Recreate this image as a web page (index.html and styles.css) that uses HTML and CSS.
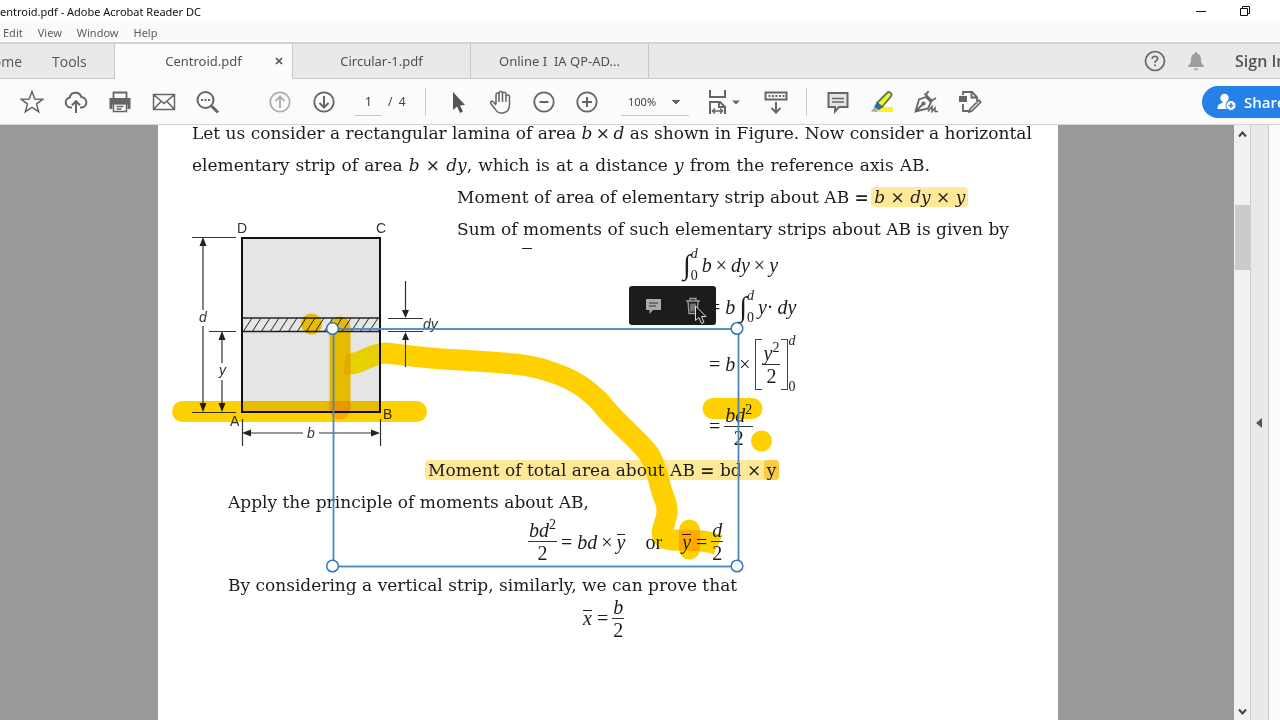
FILE: index.html
```html
<!DOCTYPE html>
<html lang="en">
<head>
<meta charset="utf-8">
<title>Centroid.pdf - Adobe Acrobat Reader DC</title>
<link rel="stylesheet" href="styles.css">
</head>
<body>
<div class="app">
  <header class="titlebar">
    <span class="title">Centroid.pdf - Adobe Acrobat Reader DC</span>
    <div class="window-controls">
      <button aria-label="Minimize"><svg width="12" height="12"><path d="M1 5.500h10" stroke="#111"/></svg></button>
      <button aria-label="Restore"><svg width="12" height="12" fill="none" stroke="#111"><path d="M1.500 2.500h7v7h-7zM3.500 2.500v-2h7v7h-2"/></svg></button>
    </div>
  </header>
  <nav class="menubar" aria-label="Menu">
    <button>Edit</button><button>View</button><button>Window</button><button>Help</button>
  </nav>
  <nav class="tabs" aria-label="Documents">
    <button class="home">Home</button>
    <button class="tools">Tools</button>
    <div class="tab active"><button>Centroid.pdf</button><button class="close" aria-label="Close tab"><svg width="8" height="8"><path d="M1 1l6 6M7 1L1 7" stroke="#555" stroke-width="1.700"/></svg></button></div>
    <div class="tab"><button>Circular-1.pdf</button></div>
    <div class="tab"><button>Online I&nbsp; IA QP-AD...</button></div>
    <div class="account">
      <button aria-label="Help"><svg width="22" height="22" fill="none" stroke="#666" stroke-width="1.700"><circle cx="11" cy="11" r="9.500"/><path d="M8.200 8.700c0-3.300 5.600-3.200 5.400 0-.1 1.900-2.700 2-2.700 4.200M10.900 14.400v1.800"/></svg></button>
      <button aria-label="Notifications"><svg width="18" height="20" fill="#9d9d9d"><path d="M8 1h2v1.500c3 .7 4 3 4 6 0 3.500 1 5 3 6.500v1H1v-1c2-1.500 3-3 3-6.500 0-3 1-5.300 4-6zM6.500 17.500h5c-.8 2.200-4.200 2.200-5 0z"/></svg></button>
      <button class="signin">Sign In</button>
    </div>
  </nav>
  <div class="toolbar">
    <div class="group">
      <button aria-label="Star"><svg class="ic" viewBox="0 0 24 24"><path d="M12 1.500l2.800 7.400 7.900.3-6.200 4.900 2.200 7.600-6.700-4.400-6.700 4.400 2.200-7.600-6.200-4.900 7.900-.3z" stroke-width="1.500"/></svg></button>
      <button aria-label="Upload"><svg class="ic" viewBox="0 0 24 24"><path d="M8 17.500H6.500a5 5 0 01-.7-9.900C6.700 1.400 15.500 1 17.300 7c6.800.6 6.600 10.500 0 10.500H16M12 23V11.500M8 15.200l4-4 4 4" stroke-width="2"/></svg></button>
      <button aria-label="Print"><svg class="ic" viewBox="0 0 24 24"><path d="M5.500 8V2.500h13V8"/><path d="M1.500 8h21v11h-3v-4.500h-15V19h-3z" fill="#666" stroke="none"/><path d="M5.500 13.500h13v8h-13zM8.500 16.500h7M8.500 19h5" stroke-width="1.500"/></svg></button>
      <button aria-label="Email"><svg class="ic" viewBox="0 0 24 24"><path d="M1.500 4.500h21v15h-21zM1.500 4.500L12 13.500l10.500-9M1.500 19.500l7.500-8M22.500 19.500l-7.500-8" stroke-width="1.500"/></svg></button>
      <button aria-label="Find"><svg class="ic" viewBox="0 0 24 24"><circle cx="9.500" cy="10" r="8" stroke-width="2"/><path d="M15.500 16l6.500 6.500" stroke-width="3"/><path d="M5 10h2M8.500 10h2M12 10h2" stroke-width="2"/></svg></button>
    </div>
    <div class="group pages">
      <button aria-label="Previous page" disabled><svg class="ic pale" viewBox="0 0 24 24"><circle cx="12" cy="12" r="9.700"/><path d="M12 18V7M7.500 11L12 6.500l4.500 4.500" stroke-width="2"/></svg></button>
      <button aria-label="Next page"><svg class="ic" viewBox="0 0 24 24"><circle cx="12" cy="12" r="9.700"/><path d="M12 6v11M7.500 13l4.500 4.500 4.500-4.500" stroke-width="2"/></svg></button>
      <input class="page-no" type="text" value="1" aria-label="Page number"><span class="page-count">/&nbsp; 4</span>
    </div>
    <div class="group view">
      <button aria-label="Select"><svg class="ic" viewBox="0 0 24 24"><path d="M7 2v18l4-3.500 3 6.500 3-1.500-3-6 5-.5z" fill="#555" stroke="none"/></svg></button>
      <button aria-label="Hand"><svg class="ic" viewBox="0 0 24 24"><path d="M7 14V4.500c0-2 3-2 3 0V12 3c0-2 3.500-2 3.500 0v9V3.800c0-2 3.400-2 3.400 0V12 6.500c0-2 3.600-2 3.600 0v8c0 10-11.500 10.500-14 5L2 13.800c-1.300-2.200 1.200-3.300 2.500-1.800L7 15" stroke-width="1.500"/></svg></button>
      <button aria-label="Zoom out"><svg class="ic" viewBox="0 0 24 24"><circle cx="12" cy="12" r="9.700"/><path d="M7.500 12h9" stroke-width="2"/></svg></button>
      <button aria-label="Zoom in"><svg class="ic" viewBox="0 0 24 24"><circle cx="12" cy="12" r="9.700"/><path d="M7 12h10M12 7v10" stroke-width="2"/></svg></button>
      <div class="zoom"><select aria-label="Zoom level"><option>100%</option><option>125%</option></select></div>
      <button class="fit" aria-label="Fit width"><svg width="34" height="24" fill="none" stroke="#666" stroke-width="2"><path d="M3 0v7h15V0M3 24V12h10l5 5v7M12 12v5h6"/><path d="M5.500 21h10M8 18.500L5.500 21 8 23.500M13 18.500l2.500 2.500-2.500 2.500" stroke-width="1.500"/><path d="M25 10.500h8l-4 4z" fill="#666" stroke="none"/></svg></button>
      <button aria-label="Keyboard"><svg class="ic" viewBox="0 0 24 24"><path d="M1.500 2.500h21v7h-21zM12 12v10M7.500 18l4.500 4.500 4.500-4.500" stroke-width="2"/><path d="M4.500 6h16" stroke-dasharray="2 1.500" stroke-width="2"/></svg></button>
    </div>
    <div class="group annotate">
      <button aria-label="Comment"><svg class="ic" viewBox="0 0 24 24"><path d="M2.500 3h19v14H13l-4 4.500V17H2.500z" fill="#e4e4e4" stroke-width="2"/><path d="M6 8.500h12M6 12h12" stroke-width="1.500"/></svg></button>
      <button aria-label="Highlight"><svg class="ic" viewBox="0 0 24 24"><path d="M10 17h13v5H3z" fill="#fff21a" stroke="none"/><path d="M7 13L17.500 2.500c1.500-1.500 5 1 4 3.200L12 17z" fill="#f8f52a" stroke="#587d50"/><path d="M7 12l6 5-4 3-5-3z" fill="#276bb0" stroke="none"/><path d="M4.500 17l3.500 3-1.500 2-5.500-.5z" fill="#aaa" stroke="none"/></svg></button>
      <button aria-label="Sign"><svg class="ic" viewBox="0 0 24 24"><path d="M1.500 21.500L5 9.500l7-2.500 5 5-3 6.500-12.500 3zm0 0L9 14M10.500 3.500l8 8M12 5l2.500-4M18 10.500l4-2.500"/><circle cx="9.500" cy="13.500" r="1.200"/><path d="M14 21.500l4-5v5l3-3.500v3.500h3" stroke-width="1.500"/></svg></button>
      <button aria-label="Fill and sign"><svg class="ic" viewBox="0 0 24 24"><path d="M5 5V2h9l5 5v4M13.500 2v5.500H19M5 14v7h6"/><path d="M1 6h8v6H1z" fill="#666" stroke="none"/><path d="M12 19L21 10l2 2-9 9-3 1z" stroke-width="1.500" fill="#ddd"/></svg></button>
    </div>
    <div class="share-slot"><button class="share"><svg width="20" height="18" fill="#fff"><circle cx="7.500" cy="5" r="4.200"/><path d="M5.500 8h4v2c3 .6 4 2 4 6H.5c0-4 1.500-5.400 5-6z"/><circle cx="14" cy="12.500" r="5" stroke="#2580e8"/><path d="M14 10v5M11.500 12.500h5" stroke="#2580e8" stroke-width="1.300"/></svg>Share</button></div>
  </div>
  <div class="workspace">
    <main class="document">
      <article class="page">
        <div class="intro">
          <p>Let us consider a rectangular lamina of area <i>b</i>&thinsp;×&thinsp;<i>d</i> as shown in Figure. Now consider a horizontal</p>
          <p class="last">elementary strip of area <i>b</i> × <i>dy</i>, which is at a distance <i>y</i> from the reference axis AB.</p>
        </div>
        <div class="derivation">
          <svg class="figure" width="250" height="232" viewBox="192 218 250 232" role="img" aria-label="Rectangular lamina ABCD">
            <defs><pattern id="hatch" width="9" height="14" patternUnits="userSpaceOnUse" x="243" y="318"><path d="M0 14L9 0" stroke="#222"/></pattern></defs>
            <rect x="242" y="238" width="138" height="174" fill="#e6e5e6"/>
            <rect x="242" y="318" width="138" height="13" fill="url(#hatch)"/>
            <path d="M242 318h138M242 331.500h138" stroke="#222" stroke-width="1.300"/>
            <rect x="242" y="238" width="138" height="174" fill="none" stroke="#111" stroke-width="2"/>
            <g stroke="#333" stroke-width="1.200">
              <path d="M192 237.500h44M192 412.500h44M209 331.500h27M203 240v70M203 326v84M222 334v29M222 380v30M242.500 419v27M380.500 419v27M245 433h58M319 433h58M388 318.500h35M388 331.500h35M405.500 281v35M405.500 334v33"/>
            </g>
            <path d="M203 237l-3.500 9h7zM203 412l-3.500-9h7zM222 331l-3.500 9h7zM222 412l-3.500-9h7zM242 433l9-3.500v7zM380 433l-9-3.500v7zM405.500 318l-3.500-8h7zM405.500 332l-3.500 8h7z" fill="#222"/>
            <g class="fig-text"><text x="237" y="233">D</text><text x="376" y="233">C</text><text x="230" y="426">A</text><text x="383" y="419">B</text></g>
            <g class="fig-text var"><text x="199" y="322">d</text><text x="219" y="375">y</text><text x="307" y="438">b</text><text x="423" y="329">dy</text></g>
          </svg>
          <div class="steps">
            <p>Moment of area of elementary strip about AB <b>=</b> <mark><i>b</i> × <i>dy</i> × <i>y</i></mark></p>
            <p>Sum of moments of such elementary strips about AB is given by</p>
            <div class="eq first"><span class="int">∫</span><span class="limits"><i>d</i><span>0</span></span><span><i>b</i>&thinsp;×&thinsp;<i>dy</i>&thinsp;×&thinsp;<i>y</i></span></div>
            <div class="eq second"><span>= <i>b</i></span><span class="int">∫</span><span class="limits"><i>d</i><span>0</span></span><span><i>y</i>·&thinsp;<i>dy</i></span></div>
            <div class="eq third"><span>= <i>b</i>&thinsp;×</span><span class="bracket"><span class="frac"><span><i>y</i><sup>2</sup></span><span>2</span></span></span><span class="limits tall"><i>d</i><span>0</span></span></div>
            <div class="eq fourth"><span>=</span><span class="frac"><span><i>bd</i><sup>2</sup></span><span>2</span></span></div>
          </div>
        </div>
        <p class="total"><mark>Moment of total area about AB <b>=</b> bd × <span class="strong">y</span></mark></p>
        <p class="indent">Apply the principle of moments about AB,</p>
        <div class="eq result"><span class="frac"><span><i>bd</i><sup>2</sup></span><span>2</span></span><span>= <i>bd</i>&thinsp;×&thinsp;<i class="bar">y</i></span><span class="or">or</span><span><i class="bar">y</i> =</span><span class="frac"><i>d</i><span>2</span></span></div>
        <p class="indent">By considering a vertical strip, similarly, we can prove that</p>
        <div class="eq closing"><span><i class="bar">x</i> =</span><span class="frac"><i>b</i><span>2</span></span></div>

        <svg class="layer curve" width="900" height="595" viewBox="158 125 900 595" aria-hidden="true">
          <path d="M345 364C360 366 370 353 386 353C410 356 430 359 460 360C500 363 525 363 548 371C575 379 588 390 600 402C618 425 634 435 649 454C659 470 659 488 665 500C672 518 659 527 663 537C668 544 700 536 718 545" fill="none" stroke="#ffd000" stroke-width="21" stroke-linejoin="round"/>
        </svg>
        <svg class="layer ink" width="900" height="595" viewBox="158 125 900 595" aria-hidden="true">
          <g fill="none" stroke="#ffd000" stroke-width="21" stroke-linecap="round">
            <path d="M182.500 411.500H416.500"/>
            <path d="M340 327V409"/>
            <path d="M311.500 324h.01"/>
            <path d="M713 408.500H752"/>
            <path d="M761.500 441h.01"/>
            <path d="M689.500 530V549"/>
          </g>
        </svg>
        <svg class="layer" width="900" height="595" viewBox="158 125 900 595" aria-hidden="true">
          <path d="M522 248.500h10" stroke="#222"/>
          <rect x="333.500" y="329" width="405" height="237.500" fill="none" stroke="#4a86bf" stroke-width="1.800"/>
          <g fill="#fff" stroke="#3777b5" stroke-width="1.500"><circle cx="332.500" cy="328.500" r="5.800"/><circle cx="737" cy="328.500" r="5.800"/><circle cx="332.500" cy="566" r="5.800"/><circle cx="737" cy="566" r="5.800"/></g>
        </svg>
        <div class="popup">
          <button aria-label="Add note"><svg width="16" height="18"><path d="M1 2h15v11H8l-3.500 4v-4H1z" fill="#aaa"/><path d="M4 6h9M4 9h7" stroke="#333"/></svg></button>
          <button aria-label="Delete"><svg width="16" height="18" fill="none" stroke="#999" stroke-width="1.400"><path d="M1 4h14M5 4V1.500h6V4M3 4l1 12.500h8L13 4M6 6.500v8M8 6.500v8M10 6.500v8"/></svg></button>
        </div>
        <svg class="cursor" width="14" height="20" aria-hidden="true"><path d="M1.500 1v14.500l3.500-3 2.500 6 2.500-1-2.500-6H12z" fill="#151515" stroke="#ddd"/></svg>
      </article>
    </main>
    <div class="scrollbar" aria-hidden="true">
      <svg width="9" height="7" fill="none" stroke="#444" stroke-width="2"><path d="M1 5.500l3.500-4L8 5.500"/></svg>
      <span class="thumb"></span>
      <svg class="down" width="9" height="7" fill="none" stroke="#444" stroke-width="2"><path d="M1 1.500l3.500 4L8 1.500"/></svg>
    </div>
    <button class="pane-toggle" aria-label="Open tools pane"><svg width="7" height="10"><path d="M6 0v10L0 5z" fill="#555"/></svg></button>
    <aside class="pane"></aside>
  </div>
</div>
</body>
</html>
```

FILE: styles.css
```css
* { box-sizing: border-box; }
body { margin: 0; font-family: "Open Sans", "Noto Sans", sans-serif; color: #444; background: #fff; }
button { font: inherit; color: inherit; background: none; border: 0; padding: 0; white-space: nowrap; }
p { margin: 0; }
svg { display: block; flex: none; }
.app { height: 100vh; display: flex; flex-direction: column; overflow: hidden; }

.titlebar { flex: none; height: 23px; display: flex; align-items: center; justify-content: space-between; background: #fff; }
.title { margin-left: -7px; font: 11px "Noto Sans", sans-serif; color: #111; white-space: nowrap; }
.window-controls { display: flex; gap: 32px; padding-right: 29px; }
.menubar { flex: none; height: 19px; display: flex; gap: 15px; padding-left: 3px; background: #fafafb; font: 11px "Noto Sans", sans-serif; color: #5c5c5c; }
.tabs { flex: none; height: 37px; display: flex; border-top: 2px solid #d3d3d3; background: #e9e9e9; font-size: 14px; color: #555; }
.home, .tools, .tab { border-bottom: 1px solid #c8c8c8; }
.home { width: 52px; padding-right: 30px; direction: rtl; }
.tools { width: 63px; padding-right: 28px; border-right: 1px solid #c8c8c8; }
.tab { position: relative; width: 178px; display: flex; align-items: center; justify-content: center; border-right: 1px solid #c8c8c8; font: 13px "Noto Sans", sans-serif; color: #505050; }
.tab.active { background: #fbfbfb; border-bottom-color: #fbfbfb; }
.close { position: absolute; right: 9px; }
.account { flex: 1; display: flex; align-items: center; justify-content: flex-end; gap: 21px; border-bottom: 1px solid #c8c8c8; }
.account .signin { width: 45px; margin-left: 9px; text-align: left; font-size: 16px; font-weight: 600; }

.toolbar { flex: none; height: 46px; display: flex; align-items: center; padding-left: 10px; background: #fbfbfc; border-bottom: 1px solid #d5d5d5; }
.group { display: flex; align-items: center; }
.group > button { width: 44px; height: 40px; display: flex; align-items: center; justify-content: center; }
.ic { width: 24px; height: 24px; fill: none; stroke: #666; stroke-width: 1.8px; }
.pale { stroke: #b0b0b0; }
.pages { margin-left: 28px; font: 12px "Noto Sans", sans-serif; }
.page-no { width: 27px; height: 28px; margin-left: 9px; border: 0; border-bottom: 1px solid #c8c8c8; padding: 0; background: none; font: inherit; color: #333; text-align: center; }
.page-count { width: 19px; margin-left: 6px; }
.view { height: 28px; margin-left: 18px; padding-left: 10px; border-left: 1px solid #ccc; }
.view > button { width: 43px; }
.zoom { width: 68px; margin-left: 13px; }
.zoom select { width: 100%; height: 28px; border: 0; border-bottom: 1px solid #c8c8c8; padding: 0 0 0 7px; appearance: none; font: 11px "Noto Sans", sans-serif; color: #444; background: linear-gradient(45deg, transparent 50%, #666 50%) 51px 12px / 4px 4px no-repeat, linear-gradient(-45deg, transparent 50%, #666 50%) 55px 12px / 4px 4px no-repeat; }
.view > .fit { width: 60px; margin-left: 5px; }
.annotate { height: 28px; margin-left: 9px; padding-left: 9px; border-left: 1px solid #ccc; }
.share-slot { width: 78px; margin-left: auto; }
.share { width: 112px; height: 32px; display: flex; align-items: center; gap: 7px; padding-left: 15px; border-radius: 16px; background: #2580e8; color: #fff; font-size: 15px; font-weight: 600; }

.workspace { flex: 1; min-height: 0; display: flex; background: #999; }
.document { flex: 1; min-width: 0; display: grid; grid-template-columns: minmax(0, 158fr) minmax(0, 900px) minmax(0, 176fr); overflow: hidden; }
.page { grid-column: 2; position: relative; background: #fff; color: #1c1c1c; font: 17px/32px "DejaVu Serif", serif; white-space: nowrap; }
.intro { margin-top: -8px; padding: 0 24px 0 34px; }
.intro .last { margin-right: 104px; text-align: justify; text-align-last: justify; white-space: normal; }
.derivation { display: flex; padding-left: 34px; }
.figure { margin: 37px 15px 0 0; }
.fig-text { font: 14px "Liberation Sans", sans-serif; fill: #333; }
.var { font-style: italic; }
mark { margin-left: -3px; padding: 0 3px; border-radius: 4px; background: #ffe999; color: inherit; }
.strong { margin: 0 -3px; padding: 0 3px; border-radius: 4px; background: #fccb40; }
.total { padding-left: 270px; }
.indent { padding-left: 70px; }

.eq { display: flex; align-items: center; gap: 4px; font: 20px/24px "Liberation Serif", serif; }
.first { height: 39px; padding-left: 226px; }
.second { height: 46px; padding-left: 252px; }
.third { height: 68px; padding-left: 252px; }
.fourth { height: 56px; padding-left: 252px; }
.int { font-size: 28px; line-height: 32px; }
.limits { height: 36px; display: flex; flex-direction: column; justify-content: space-between; margin-left: -4px; font-size: 14px; line-height: 14px; }
.limits.tall { height: 60px; }
.frac { display: flex; flex-direction: column; align-items: center; text-align: center; line-height: 22px; }
.frac > :first-child { align-self: stretch; border-bottom: 1px solid #333; padding: 0 1px; }
sup { font-size: 14px; line-height: 0; }
.bracket { padding: 3px 7px; background: linear-gradient(#444, #444) 0 0 / 6px 1px, linear-gradient(#444, #444) 0 100% / 6px 1px, linear-gradient(#444, #444) 100% 0 / 6px 1px, linear-gradient(#444, #444) 100% 100% / 6px 1px; background-repeat: no-repeat; border: solid #444; border-width: 0 1px; }
.bar { display: inline-block; border-top: 1px solid #222; line-height: 14px; }
.result { height: 47px; margin-bottom: 4px; padding-left: 370px; }
.or { margin: 0 16px; }
.closing { height: 34px; padding-left: 425px; }

.layer { position: absolute; top: 0; left: 0; pointer-events: none; }
.curve { mix-blend-mode: darken; }
.ink, .ink path { mix-blend-mode: multiply; }
.popup { position: absolute; left: 471px; top: 161px; width: 87px; height: 39px; display: flex; align-items: center; justify-content: center; gap: 24px; border-radius: 3px; background: #1c1c1c; }
.cursor { position: absolute; left: 536px; top: 180px; }

.scrollbar { width: 17px; display: flex; flex-direction: column; align-items: center; padding: 6px 0 5px; background: #f1f1f2; border-right: 1px solid #ccc; }
.thumb { width: 15px; height: 65px; margin-top: 67px; background: #cbcbcb; }
.down { margin-top: auto; }
.pane-toggle { width: 18px; display: flex; align-items: center; justify-content: center; background: #e9e9e9; border-right: 1px solid #c6c6c6; }
.pane { width: 11px; background: #fbfafc; }
```
